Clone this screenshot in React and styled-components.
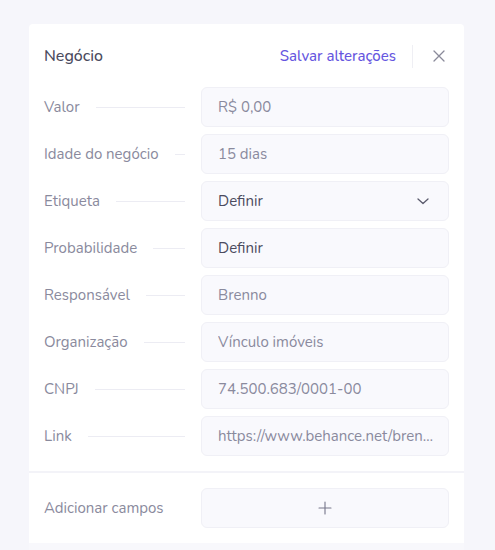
import React from 'react';
import styled, { createGlobalStyle } from 'styled-components';

const GlobalStyle = createGlobalStyle`
  html, body {
    margin: 0;
    padding: 0;
    background: #f6f6fb;
    font-family: "Nunito", "Lato", "Noto Sans", sans-serif;
  }
`;

const fields = [
  { label: 'Valor', value: 'R$ 0,00' },
  { label: 'Idade do negócio', value: '15 dias' },
  { label: 'Etiqueta', value: 'Definir', strong: true, select: true },
  { label: 'Probabilidade', value: 'Definir', strong: true },
  { label: 'Responsável', value: 'Brenno' },
  { label: 'Organização', value: 'Vínculo imóveis' },
  { label: 'CNPJ', value: '74.500.683/0001-00' },
  { label: 'Link', value: 'https://www.behance.net/brennosilva' },
];

function App() {
  return (
    <>
      <GlobalStyle />
      <Page>
        <Card>
          <Header>
            <Title>Negócio</Title>
            <Actions>
              <SaveLink>Salvar alterações</SaveLink>
              <VDivider />
              <CloseButton aria-label="Fechar">
                <svg width="12" height="12" viewBox="0 0 12 12" fill="none">
                  <path d="M1 1L11 11M11 1L1 11" stroke="#8a8a9a" strokeWidth="1.3" strokeLinecap="round" />
                </svg>
              </CloseButton>
            </Actions>
          </Header>
          <Fields>
            {fields.map((f) => (
              <Row key={f.label}>
                <Label>
                  <LabelText>{f.label}</LabelText>
                  <Line />
                </Label>
                <Input strong={f.strong} select={f.select}>
                  <Value>{f.value}</Value>
                  {f.select && (
                    <svg width="12" height="7" viewBox="0 0 12 7" fill="none">
                      <path d="M1 1L6 5.5L11 1" stroke="#5a5a6c" strokeWidth="1.3" strokeLinecap="round" strokeLinejoin="round" />
                    </svg>
                  )}
                </Input>
              </Row>
            ))}
          </Fields>
          <Divider />
          <Footer>
            <Row>
              <Label>
                <LabelText>Adicionar campos</LabelText>
              </Label>
              <AddButton aria-label="Adicionar campos">
                <svg width="14" height="14" viewBox="0 0 14 14" fill="none">
                  <path d="M7 1V13M1 7H13" stroke="#76768a" strokeWidth="1.1" strokeLinecap="round" />
                </svg>
              </AddButton>
            </Row>
          </Footer>
        </Card>
        <NextCard />
      </Page>
    </>
  );
}

const Page = styled.div`
  padding: 24px 0 0 29px;
  height: 550px;
  box-sizing: border-box;
  overflow: hidden;
`;

const Card = styled.div`
  width: 435px;
  background: #ffffff;
  border-radius: 4px 4px 0 0;
`;

const NextCard = styled.div`
  width: 435px;
  height: 40px;
  background: #f8f8fc;
`;

const Header = styled.div`
  display: flex;
  align-items: center;
  justify-content: space-between;
  padding: 21px 15px 10px 15px;
  height: 22px;
`;

const Title = styled.h2`
  margin: 0;
  font-size: 16px;
  font-weight: 500;
  color: #4b4b5e;
`;

const Actions = styled.div`
  display: flex;
  align-items: center;
  gap: 16px;
`;

const SaveLink = styled.a`
  font-size: 15px;
  font-weight: 500;
  color: #6656e0;
  cursor: pointer;
`;

const VDivider = styled.span`
  width: 1px;
  height: 23px;
  background: #efeff4;
`;

const CloseButton = styled.button`
  width: 20px;
  height: 20px;
  padding: 0;
  border: none;
  background: none;
  display: flex;
  align-items: center;
  justify-content: center;
  cursor: pointer;
`;

const Fields = styled.div`
  display: flex;
  flex-direction: column;
  gap: 7px;
  padding: 10px 15px 0 15px;
`;

const Row = styled.div`
  display: grid;
  grid-template-columns: 141px 248px;
  column-gap: 16px;
  align-items: center;
`;

const Label = styled.div`
  display: flex;
  align-items: center;
  gap: 16px;
  min-width: 0;
`;

const LabelText = styled.span`
  font-size: 15px;
  color: #8a8a9d;
  white-space: nowrap;
`;

const Line = styled.span`
  flex: 1;
  height: 1px;
  background: #ececf3;
`;

const Input = styled.div`
  height: 40px;
  box-sizing: border-box;
  display: flex;
  align-items: center;
  justify-content: space-between;
  gap: 10px;
  padding: 0 ${(p) => (p.select ? '19px' : '11px')} 0 16px;
  background: #f9f9fd;
  border: 1px solid #f0f0f6;
  border-radius: 6px;
  font-size: 15px;
  color: ${(p) => (p.strong ? '#4b4b5e' : '#8a8a9d')};
`;

const Value = styled.span`
  flex: 1;
  min-width: 0;
  white-space: nowrap;
  overflow: hidden;
  text-overflow: ellipsis;
`;

const Divider = styled.div`
  height: 2px;
  margin-top: 15px;
  background: #f3f3f8;
`;

const Footer = styled.div`
  padding: 15px;
`;

const AddButton = styled.button`
  height: 40px;
  display: flex;
  align-items: center;
  justify-content: center;
  background: #f9f9fd;
  border: 1px solid #f0f0f6;
  border-radius: 6px;
  cursor: pointer;
`;

export default App;
